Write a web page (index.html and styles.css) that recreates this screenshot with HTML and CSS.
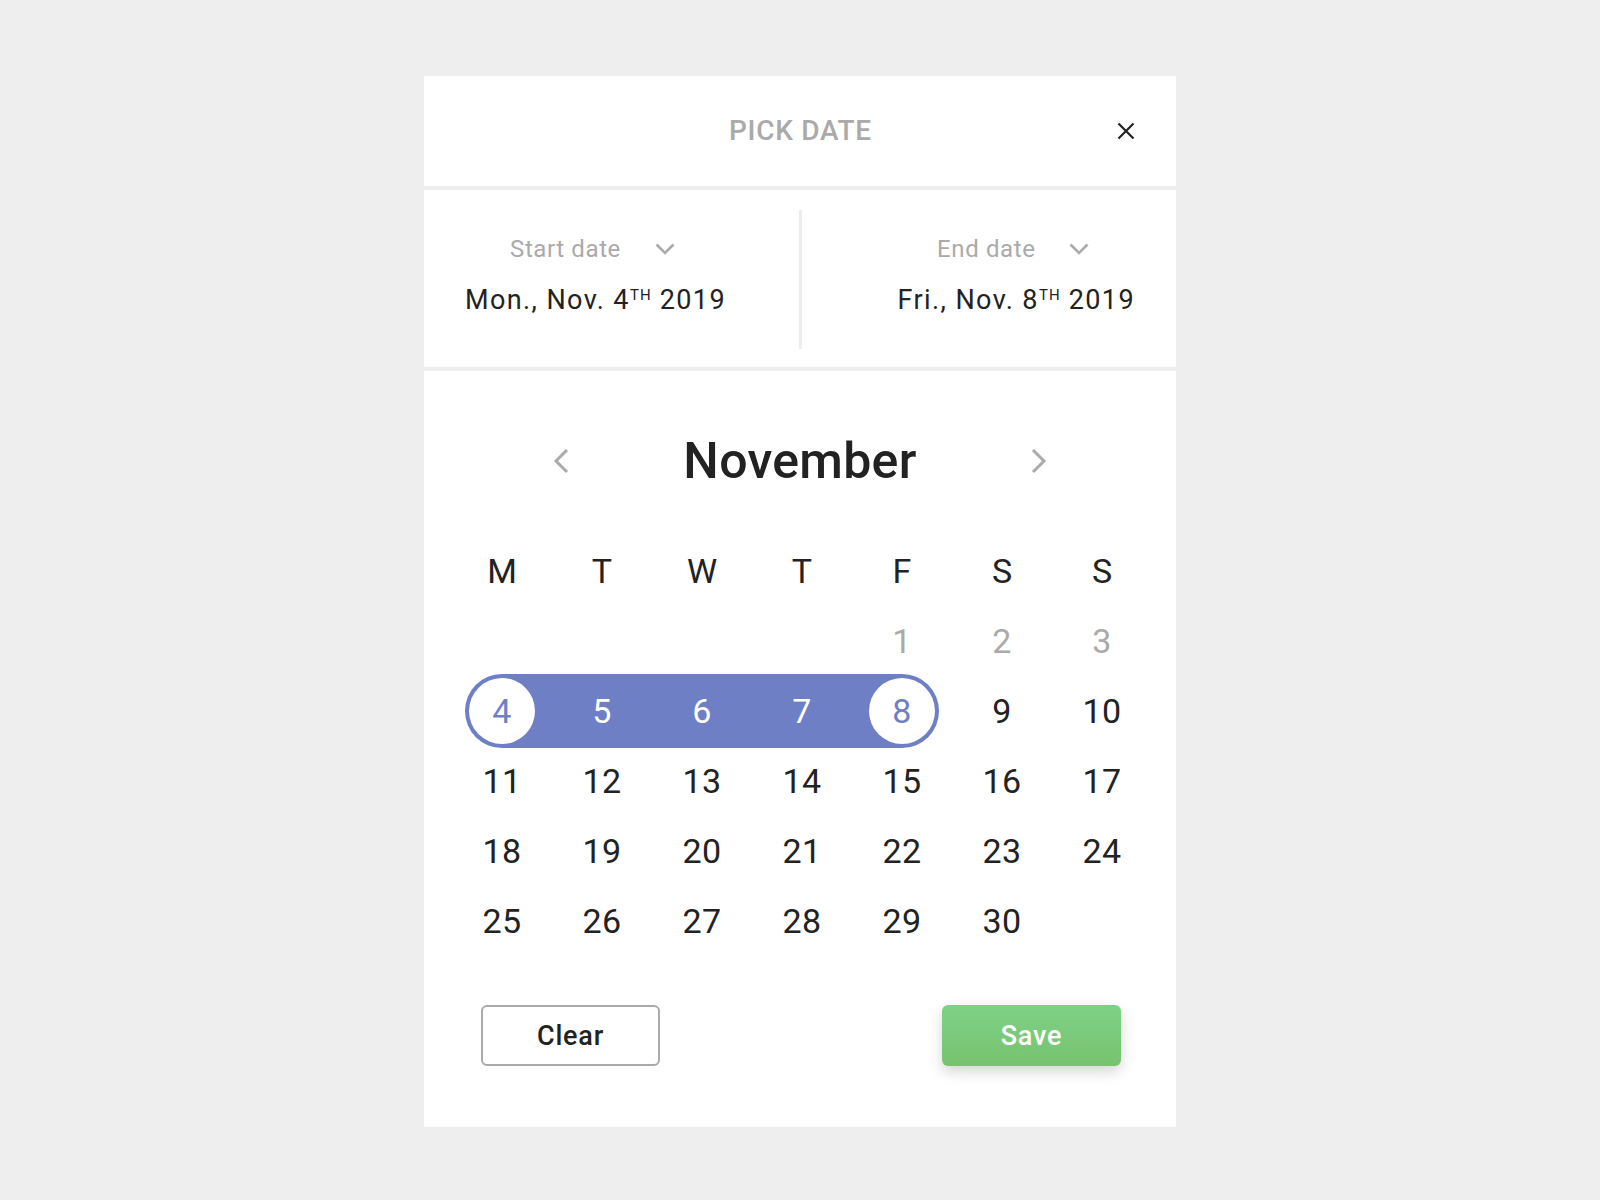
FILE: index.html
```html
<!DOCTYPE html>
<html lang="en">
<head>
<meta charset="utf-8">
<title>Pick date</title>
<link rel="stylesheet" href="styles.css">
</head>
<body>
<div class="card">
  <div class="header">
    <div></div>
    <div class="title">PICK DATE</div>
    <button class="close" aria-label="Close">
      <svg width="18" height="18" viewBox="0 0 18 18"><path d="M1.5 1.5 L16.5 16.5 M16.5 1.5 L1.5 16.5" stroke="#222" stroke-width="2.2" fill="none"/></svg>
    </button>
  </div>

  <div class="dates">
    <div class="date-block start-block">
      <div class="label-row">
        <span class="label">Start date</span>
        <svg class="chev" width="20" height="12" viewBox="0 0 20 12"><polyline points="1.5,1.5 10,10 18.5,1.5" stroke="#aaa" stroke-width="2.6" fill="none"/></svg>
      </div>
      <div class="date-value">Mon., Nov. 4<span class="sup">TH</span> 2019</div>
    </div>
    <div class="divider"></div>
    <div class="date-block end-block">
      <div class="label-row">
        <span class="label">End date</span>
        <svg class="chev" width="20" height="12" viewBox="0 0 20 12"><polyline points="1.5,1.5 10,10 18.5,1.5" stroke="#aaa" stroke-width="2.6" fill="none"/></svg>
      </div>
      <div class="date-value">Fri., Nov. 8<span class="sup">TH</span> 2019</div>
    </div>
  </div>

  <div class="calendar">
    <div class="month-nav">
      <button class="nav-btn" aria-label="Previous month">
        <svg width="18" height="26" viewBox="0 0 18 26"><polyline points="15,2 4,13 15,24" stroke="#aaa" stroke-width="3" fill="none"/></svg>
      </button>
      <div class="month">November</div>
      <button class="nav-btn" aria-label="Next month">
        <svg width="18" height="26" viewBox="0 0 18 26"><polyline points="3,2 14,13 3,24" stroke="#aaa" stroke-width="3" fill="none"/></svg>
      </button>
    </div>

    <div class="weekdays">
      <div>M</div><div>T</div><div>W</div><div>T</div><div>F</div><div>S</div><div>S</div>
    </div>

    <div class="days">
      <div class="day"></div><div class="day"></div><div class="day"></div><div class="day"></div>
      <div class="day muted">1</div><div class="day muted">2</div><div class="day muted">3</div>

      <div class="day in-range start"><span class="circle">4</span></div>
      <div class="day in-range">5</div>
      <div class="day in-range">6</div>
      <div class="day in-range">7</div>
      <div class="day in-range end"><span class="circle">8</span></div>
      <div class="day">9</div><div class="day">10</div>

      <div class="day">11</div><div class="day">12</div><div class="day">13</div><div class="day">14</div><div class="day">15</div><div class="day">16</div><div class="day">17</div>
      <div class="day">18</div><div class="day">19</div><div class="day">20</div><div class="day">21</div><div class="day">22</div><div class="day">23</div><div class="day">24</div>
      <div class="day">25</div><div class="day">26</div><div class="day">27</div><div class="day">28</div><div class="day">29</div><div class="day">30</div><div class="day"></div>
    </div>

    <div class="actions">
      <button class="btn btn-clear">Clear</button>
      <button class="btn btn-save">Save</button>
    </div>
  </div>
</div>
</body>
</html>
```

FILE: styles.css
```css
* { box-sizing: border-box; }

html, body {
  margin: 0;
  padding: 0;
  background: #eeeeee;
  font-family: Roboto, "Noto Sans", "Liberation Sans", sans-serif;
}

button {
  font-family: inherit;
  border: none;
  background: none;
  padding: 0;
  margin: 0;
  cursor: pointer;
}

.card {
  width: 752px;
  margin: 76px auto 0;
  background: #ffffff;
}

/* Header */
.header {
  height: 114px;
  border-bottom: 4px solid #eeeeee;
  display: grid;
  grid-template-columns: 1fr auto 1fr;
  align-items: center;
}

.title {
  font-size: 28px;
  font-weight: 500;
  letter-spacing: 0.7px;
  color: #aaaaaa;
  line-height: 32px;
  margin-right: -0.7px;
}

.close {
  justify-self: end;
  margin-right: 41px;
  width: 18px;
  height: 18px;
  display: flex;
}

/* Dates */
.dates {
  height: 181px;
  border-bottom: 4px solid #eeeeee;
  display: grid;
  grid-template-columns: 1fr 3px 1fr;
  align-items: center;
  padding: 0 41px;
}

.divider {
  width: 3px;
  height: 139px;
  background: #eeeeee;
  margin-top: 2px;
}

.date-block {
  display: flex;
  flex-direction: column;
  align-items: center;
  gap: 21px;
  padding-bottom: 6px;
}

.start-block { justify-self: start; }
.end-block { justify-self: end; }

.label-row {
  display: flex;
  align-items: center;
  gap: 34px;
  margin-left: -6px;
}

.label {
  font-size: 24px;
  line-height: 28px;
  color: #aaaaaa;
  letter-spacing: 0.6px;
}

.chev { display: block; }

.date-value {
  font-size: 27px;
  line-height: 32px;
  color: #222222;
  letter-spacing: 1.4px;
  white-space: nowrap;
}

.sup {
  font-size: 15px;
  vertical-align: 9px;
  line-height: 0;
  letter-spacing: 1px;
}

/* Calendar */
.calendar {
  padding: 60px 24px 61px 28px;
}

.month-nav {
  height: 60px;
  display: flex;
  align-items: center;
  justify-content: center;
  gap: 110px;
  margin-left: -4px;
}

.nav-btn {
  width: 24px;
  height: 30px;
  display: flex;
  align-items: center;
  justify-content: center;
}

.month {
  font-size: 50px;
  font-weight: 500;
  color: #222222;
  line-height: 60px;
  letter-spacing: 0.3px;
}

.weekdays,
.days {
  display: grid;
  grid-template-columns: repeat(7, 100px);
  grid-auto-rows: 70px;
}

.weekdays {
  margin-top: 45px;
}

.weekdays > div {
  display: flex;
  align-items: center;
  justify-content: center;
  font-size: 34px;
  color: #222222;
}

.day {
  display: flex;
  align-items: center;
  justify-content: center;
  font-size: 34px;
  color: #222222;
  letter-spacing: 0.5px;
}

.day.muted { color: #aaaaaa; }

.day.in-range {
  background: #6e7fc5;
  color: #ffffff;
  height: 74px;
  align-self: center;
}

.day.start {
  margin-left: 13px;
  border-radius: 37px 0 0 37px;
  justify-content: flex-start;
  padding-left: 4px;
}

.day.end {
  margin-right: 13px;
  border-radius: 0 37px 37px 0;
  justify-content: flex-end;
  padding-right: 4px;
}

.circle {
  width: 66px;
  height: 66px;
  border-radius: 50%;
  background: #ffffff;
  color: #6e7fc5;
  display: flex;
  align-items: center;
  justify-content: center;
}

/* Actions */
.actions {
  margin-top: 49px;
  padding: 0 31px 0 29px;
  display: flex;
  justify-content: space-between;
}

.btn {
  width: 179px;
  height: 61px;
  border-radius: 6px;
  font-size: 27px;
  font-weight: 500;
  letter-spacing: 0.8px;
}

.btn-clear {
  border: 2px solid #aaaaaa;
  color: #222222;
  background: #ffffff;
}

.btn-save {
  color: #ffffff;
  background: linear-gradient(#7ed186, #77c36f);
  box-shadow: 0 6px 14px rgba(0, 0, 0, 0.16);
}
```
